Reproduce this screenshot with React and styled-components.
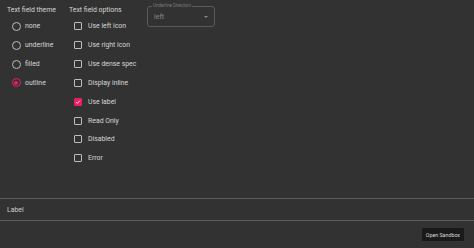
import styled, { createGlobalStyle } from 'styled-components';

const themes = ['none', 'underline', 'filled', 'outline'];
const options = [
  { label: 'Use left icon', checked: false },
  { label: 'Use right icon', checked: false },
  { label: 'Use dense spec', checked: false },
  { label: 'Display inline', checked: false },
  { label: 'Use label', checked: true },
  { label: 'Read Only', checked: false },
  { label: 'Disabled', checked: false },
  { label: 'Error', checked: false },
];

const GlobalStyle = createGlobalStyle`
  html, body {
    margin: 0;
    background: #323232;
    font-family: Roboto, "Noto Sans", sans-serif;
    color: #d6d6d6;
  }
`;

const Page = styled.div`
  width: 474px;
  height: 248px;
  display: flex;
  flex-direction: column;
  overflow: hidden;
`;

const Controls = styled.div`
  display: flex;
  padding: 6px 0 0 7px;
  height: 192px;
`;

const Group = styled.div`
  display: flex;
  flex-direction: column;
  width: ${(p) => p.width}px;
`;

const Title = styled.div`
  font-size: 6.9px;
  line-height: 9px;
  margin-bottom: 2px;
`;

const Row = styled.label`
  display: flex;
  align-items: center;
  height: 18.85px;
  padding-left: ${(p) => p.indent}px;
  font-size: 6.9px;
  gap: ${(p) => p.gap}px;
`;

const Radio = styled.span`
  box-sizing: border-box;
  width: 9px;
  height: 9px;
  border-radius: 50%;
  border: 1.3px solid ${(p) => (p.on ? '#e91e63' : '#bdbdbd')};
  display: flex;
  align-items: center;
  justify-content: center;
  &::after {
    content: '';
    width: 4px;
    height: 4px;
    border-radius: 50%;
    background: ${(p) => (p.on ? '#e91e63' : 'transparent')};
  }
`;

const Box = styled.span`
  box-sizing: border-box;
  width: 8px;
  height: 8px;
  border-radius: 1px;
  border: 1.2px solid ${(p) => (p.on ? '#e91e63' : '#bdbdbd')};
  background: ${(p) => (p.on ? '#e91e63' : 'transparent')};
  display: flex;
  align-items: center;
  justify-content: center;
`;

const Select = styled.div`
  position: relative;
  width: 68px;
  height: 21px;
  border: 1px solid #5a5a5a;
  border-radius: 3px;
  box-sizing: border-box;
  display: flex;
  align-items: center;
  justify-content: space-between;
  padding: 0 6px;
  font-size: 7px;
  color: #8a8a8a;
`;

const Notch = styled.span`
  position: absolute;
  top: -4px;
  left: 4px;
  padding: 0 1px;
  background: #323232;
  font-size: 4.5px;
  line-height: 6px;
  color: #7a7a7a;
`;

const Caret = styled.span`
  width: 0;
  height: 0;
  border-left: 2px solid transparent;
  border-right: 2px solid transparent;
  border-top: 2px solid #8a8a8a;
`;

const Field = styled.div`
  border-top: 1px solid #5c5c5c;
  border-bottom: 1px solid #5c5c5c;
  height: 21px;
  display: flex;
  align-items: center;
  padding-left: 7px;
  font-size: 6.9px;
  color: #cfcfcf;
`;

const Footer = styled.div`
  display: flex;
  justify-content: flex-end;
  padding: 7px 10px 0 0;
`;

const Button = styled.button`
  background: #1a1a1a;
  color: #d8d8d8;
  border: none;
  border-radius: 1px;
  font-family: Roboto, sans-serif;
  font-size: 5.3px;
  height: 13px;
  padding: 0 4px;
`;

export default function App() {
  return (
    <Page>
      <GlobalStyle />
      <Controls>
        <Group width={62}>
          <Title>Text field theme</Title>
          {themes.map((t) => (
            <Row key={t} indent={4.5} gap={4.5}>
              <Radio on={t === 'outline'} />
              {t}
            </Row>
          ))}
        </Group>
        <Group width={78}>
          <Title>Text field options</Title>
          {options.map((o) => (
            <Row key={o.label} indent={5} gap={6}>
              <Box on={o.checked}>
                {o.checked && (
                  <svg width="6" height="6" viewBox="0 0 24 24">
                    <path d="M4 12.5l5 5L20 6.5" fill="none" stroke="#fff" strokeWidth="3.5" />
                  </svg>
                )}
              </Box>
              {o.label}
            </Row>
          ))}
        </Group>
        <Select>
          <Notch>Underline Direction</Notch>
          left
          <Caret />
        </Select>
      </Controls>
      <Field>Label</Field>
      <Footer>
        <Button>Open Sandbox</Button>
      </Footer>
    </Page>
  );
}
